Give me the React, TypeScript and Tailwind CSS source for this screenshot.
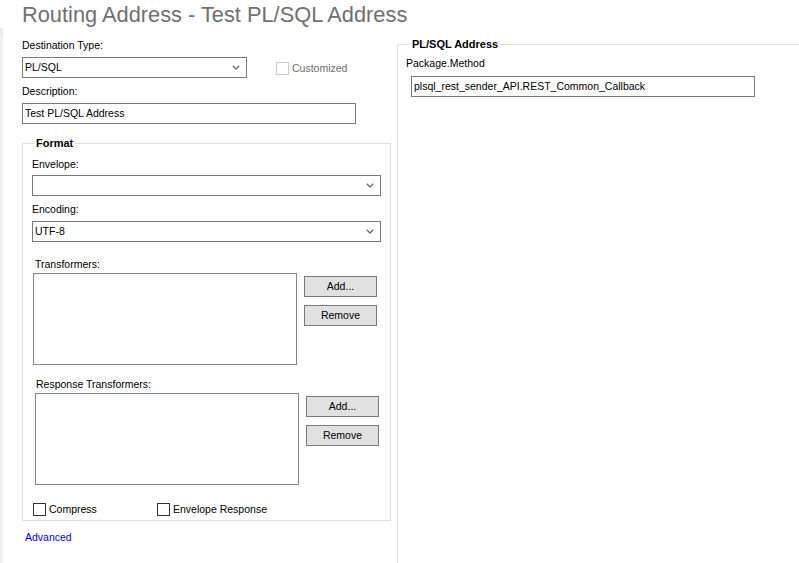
import React from "react";

function Chevron() {
  return (
    <svg width="8" height="5" viewBox="0 0 8 5" className="shrink-0">
      <path d="M0.8 0.8 L4 4 L7.2 0.8" fill="none" stroke="#6a6a6a" strokeWidth="1.3" />
    </svg>
  );
}

function Select({ value, className }: { value: string; className: string }) {
  return (
    <div
      className={`flex h-[21px] items-center justify-between border border-[#7a7a7a] bg-white pl-[2px] pr-[6px] leading-[19px] ${className}`}
    >
      <span>{value}</span>
      <Chevron />
    </div>
  );
}

function Button({ label }: { label: string }) {
  return (
    <div className="flex h-[21px] w-[73px] items-center justify-center border border-[#7a7a7a] bg-[#e1e1e1] leading-[19px]">
      {label}
    </div>
  );
}

function Check({ label, disabled }: { label: string; disabled?: boolean }) {
  return (
    <div className="flex items-center">
      <div
        className={`h-[13px] w-[13px] border bg-white ${disabled ? "border-[#cccccc]" : "border-[#333333]"}`}
      />
      <span className={`ml-[3px] ${disabled ? "text-[#6d6d6d]" : ""}`}>{label}</span>
    </div>
  );
}

export default function App() {
  return (
    <div className="flex h-[563px] w-[799px] overflow-hidden bg-white font-['Liberation_Sans',Arial,sans-serif] text-[10.5px] leading-[13px] text-black">
      {/* left edge strip */}
      <div className="flex w-[3px] flex-col">
        <div className="h-[28px]" />
        <div className="h-[9px] bg-[#e9f1de]" />
        <div className="flex-1 bg-[#f2f2f2]" />
      </div>

      <div className="flex flex-1 flex-col">
        <h1 className="ml-[19px] mt-[3px] text-[21.8px] leading-[24px] text-[#707070]">
          Routing Address - Test PL/SQL Address
        </h1>

        <div className="flex flex-1">
          {/* left column */}
          <div className="w-[394px] pl-[19px]">
            <div className="mt-[12px]">Destination Type:</div>
            <div className="mt-[5px] flex items-center">
              <Select value="PL/SQL" className="w-[225px]" />
              <div className="ml-[29px] mt-[1px]">
                <Check label="Customized" disabled />
              </div>
            </div>
            <div className="mt-[7px]">Description:</div>
            <div className="mt-[5px] h-[21px] w-[334px] border border-[#7a7a7a] bg-white pl-[2px] leading-[19px]">
              Test PL/SQL Address
            </div>

            {/* Format group */}
            <div className="relative mt-[19px] h-[378px] w-[369px] border border-[#dddddd]">
              <div className="absolute left-[11px] top-[-7px] bg-white px-[2px] text-[11px] font-bold">
                Format
              </div>
              <div className="pl-[9px] pt-[14px]">
                <div>Envelope:</div>
                <Select value="" className="mt-[4px] w-[349px]" />
                <div className="mt-[7px]">Encoding:</div>
                <Select value="UTF-8" className="mt-[5px] w-[349px]" />

                <div className="ml-[3px] mt-[16px]">Transformers:</div>
                <div className="ml-[1px] mt-[2px] flex">
                  <div className="h-[92px] w-[264px] border border-[#828790] bg-white" />
                  <div className="ml-[7px] mt-[3px] flex flex-col gap-[8px]">
                    <Button label="Add..." />
                    <Button label="Remove" />
                  </div>
                </div>

                <div className="ml-[4px] mt-[13px]">Response Transformers:</div>
                <div className="ml-[3px] mt-[2px] flex">
                  <div className="h-[92px] w-[264px] border border-[#828790] bg-white" />
                  <div className="ml-[7px] mt-[3px] flex flex-col gap-[8px]">
                    <Button label="Add..." />
                    <Button label="Remove" />
                  </div>
                </div>

                <div className="ml-[1px] mt-[18px] flex">
                  <div className="w-[124px]">
                    <Check label="Compress" />
                  </div>
                  <Check label="Envelope Response" />
                </div>
              </div>
            </div>

            <div className="ml-[3px] mt-[10px] text-[#0000ff]">Advanced</div>
          </div>

          {/* right column */}
          <div className="relative mt-[17px] flex-1 border-l border-t border-[#e3e3e3]">
            <div className="absolute left-[12px] top-[-7px] bg-white px-[2px] text-[11px] font-bold">
              PL/SQL Address
            </div>
            <div className="pl-[8px] pt-[12px]">
              <div>Package.Method</div>
              <div className="ml-[5px] mt-[6px] h-[21px] w-[344px] border border-[#7a7a7a] bg-white pl-[2px] leading-[19px]">
                plsql_rest_sender_API.REST_Common_Callback
              </div>
            </div>
          </div>
        </div>
      </div>
    </div>
  );
}
